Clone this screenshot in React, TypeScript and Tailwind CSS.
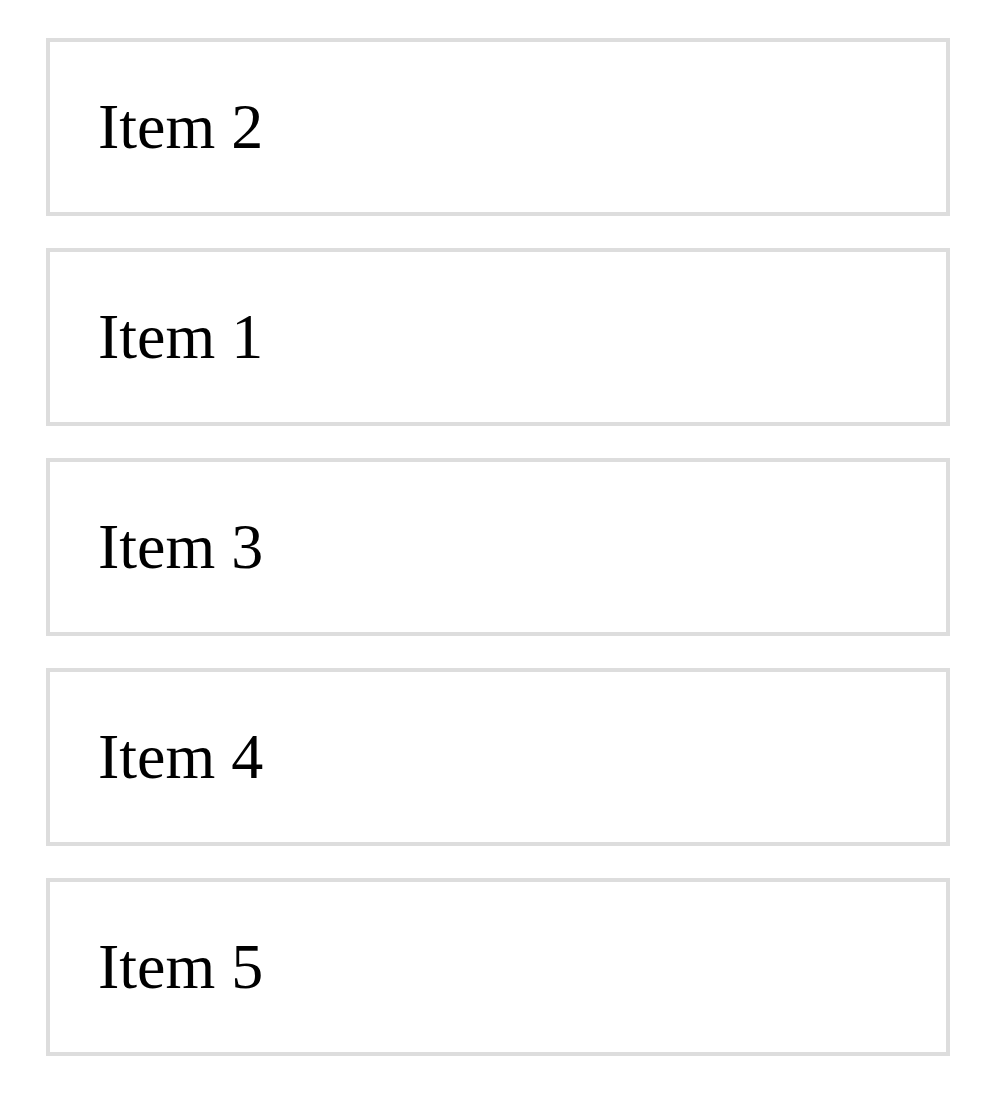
import React from "react";

const items = ["Item 2", "Item 1", "Item 3", "Item 4", "Item 5"];

export default function App() {
  return (
    <div className="min-h-screen bg-white pt-[38px] pl-[46px] pr-[40px]">
      <div className="flex flex-col gap-[32px]">
        {items.map((item) => (
          <div
            key={item}
            className="border-4 border-[#dddddd] bg-white px-[48px] py-[48px] text-[64px] leading-[74px] text-black"
            style={{ fontFamily: '"Liberation Serif", "Times New Roman", serif' }}
          >
            {item}
          </div>
        ))}
      </div>
    </div>
  );
}
